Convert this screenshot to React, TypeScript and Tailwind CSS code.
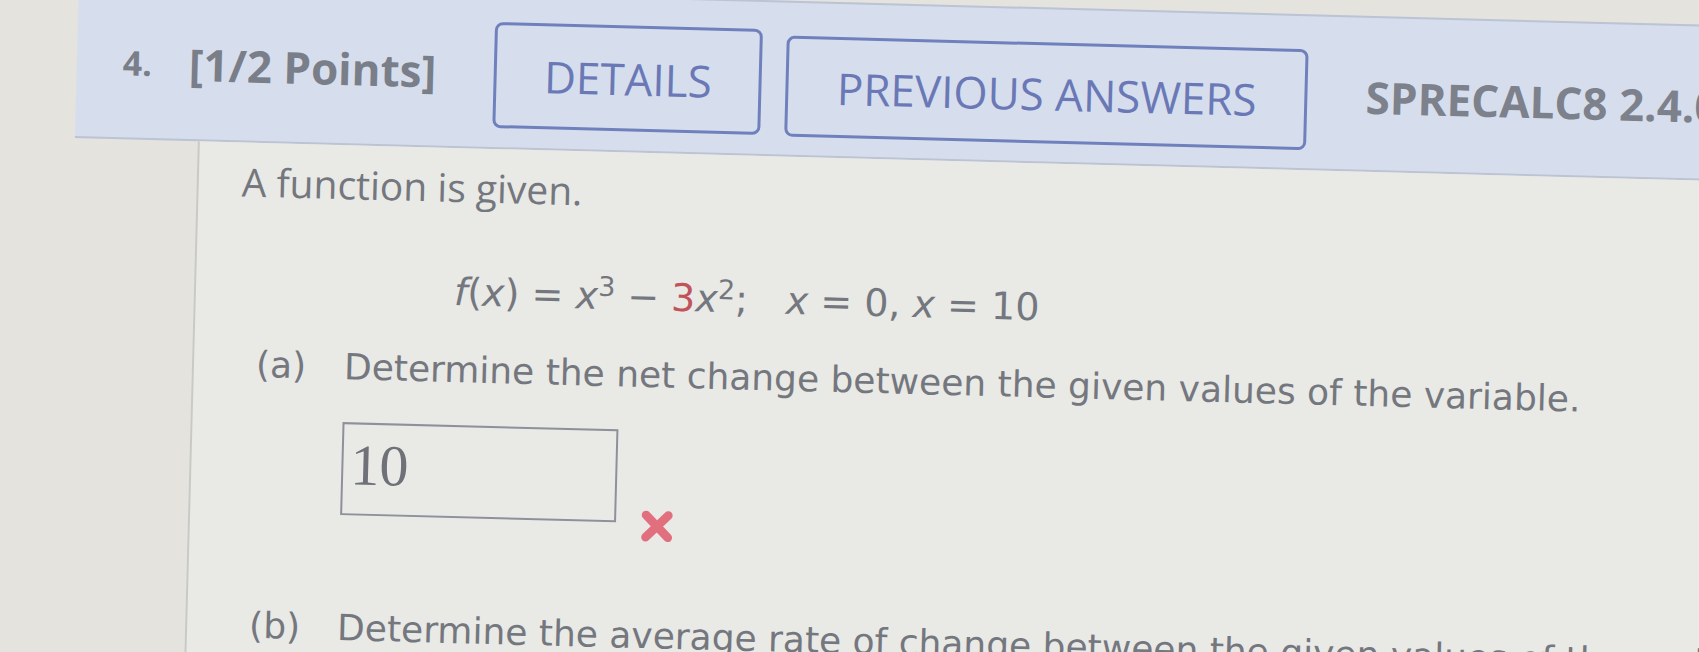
export default function App() {
  return (
    <div className="h-[652px] w-full overflow-hidden bg-[#e4e3de]">
      <div className="-mt-[20px] w-[1800px] origin-top-left rotate-[1.5deg]">
        {/* Question header */}
        <div className="ml-[79px] flex h-[156px] items-center border-b-2 border-t-2 border-[#bcc3d3] bg-[#d6deee] pt-[2px] font-['Open_Sans',sans-serif]">
          <span className="ml-[46px] text-[34px] font-bold text-[#7a7e88]">4.</span>
          <span className="ml-[37px] text-[44px] font-bold text-[#7a7e88]">[1/2 Points]</span>
          <div className="ml-[58px] mt-[6px] flex h-[106px] w-[268px] items-center justify-center rounded-[8px] border-[3px] border-[#7080bc]">
            <span className="text-[44px] font-medium text-[#6a79b6]">DETAILS</span>
          </div>
          <div className="ml-[24px] mt-[13px] flex h-[101px] w-[522px] items-center justify-center rounded-[8px] border-[3px] border-[#7080bc]">
            <span className="text-[44px] font-medium text-[#6a79b6]">PREVIOUS ANSWERS</span>
          </div>
          <span className="ml-[58px] mt-[4px] text-[44px] font-bold text-[#7d818c]">SPRECALC8 2.4.003.</span>
        </div>

        {/* Question body */}
        <div className="ml-[202px] h-[560px] border-l-2 border-[#c9c9c6] bg-[#e9e9e6] pl-[43px] text-[#74777e]">
          <p className="pt-[19px] font-['Open_Sans',sans-serif] text-[39px] leading-none">A function is given.</p>

          <p className="ml-[215px] mt-[67px] font-['DejaVu_Sans',sans-serif] text-[38px] leading-none">
            <i>f</i>(<i>x</i>) = <i>x</i>
            <sup className="text-[27px]">3</sup> − <span className="text-[#c0545a]">3</span>
            <i>x</i>
            <sup className="text-[27px]">2</sup>;<span className="inline-block w-[38px]" />
            <i>x</i> = 0, <i>x</i> = 10
          </p>

          <div className="ml-[19px] mt-[41px] flex font-['DejaVu_Sans',sans-serif] text-[36px] leading-none">
            <span className="w-[88px] shrink-0">(a)</span>
            <div>
              <p>Determine the net change between the given values of the variable.</p>
              <div className="mt-[37px] flex items-end">
                <div className="flex h-[93px] w-[276px] items-center border-2 border-[#8d9199] pb-[8px] pl-[7px]">
                  <span className="font-['Liberation_Serif',serif] text-[58px] leading-none text-[#6e7178]">10</span>
                </div>
                <svg viewBox="0 0 24 24" className="-mb-[22px] ml-[22px] h-[38px] w-[38px]">
                  <path d="M5 5 L19 19 M19 5 L5 19" stroke="#e26f7e" strokeWidth="5.5" strokeLinecap="round" />
                </svg>
              </div>
            </div>
          </div>

          <div className="ml-[19px] mt-[95px] flex font-['DejaVu_Sans',sans-serif] text-[36px] leading-none">
            <span className="w-[88px] shrink-0">(b)</span>
            <p className="whitespace-nowrap">Determine the average rate of change between the given values of the variable.</p>
          </div>
        </div>
      </div>
    </div>
  );
}
